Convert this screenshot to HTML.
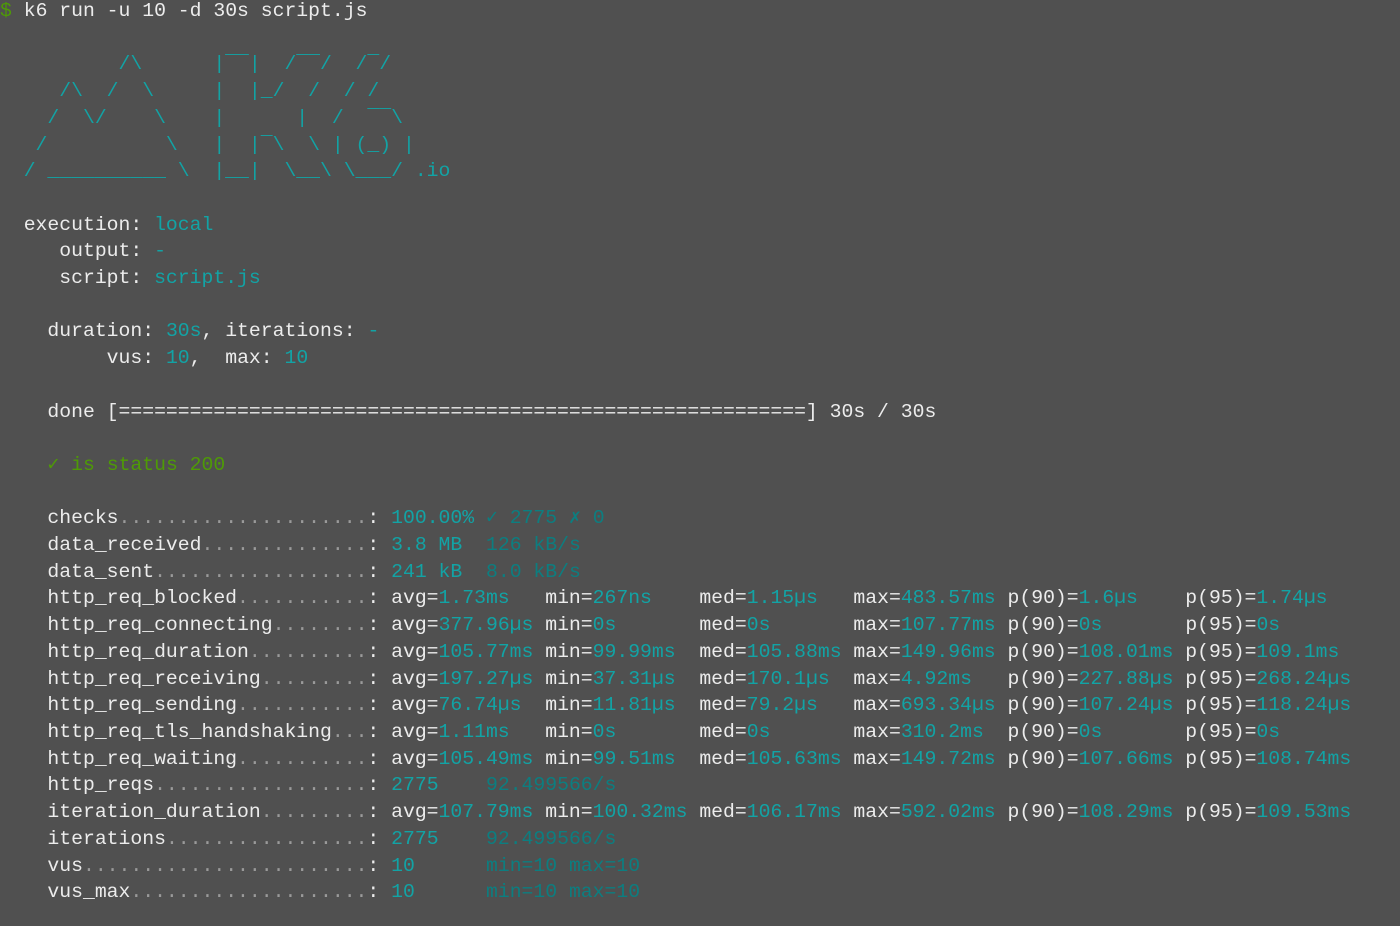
<!DOCTYPE html>
<html><head><meta charset="utf-8"><style>
html,body{margin:0;padding:0;background:#505050;width:1400px;height:926px;overflow:hidden}
pre{margin:0;position:absolute;left:0;top:-2px;font-family:"Liberation Mono","DejaVu Sans Mono",monospace;font-size:19.75px;line-height:26.7px;color:#ececec}
.c{color:#12a3a5}.d{color:#0c7e80}.g{color:#4e9a06}.s{color:#9a9a9a}
</style></head><body><pre><span class="g">$</span> k6 run -u 10 -d 30s script.js
<span class="c">
          /\      |‾‾|  /‾‾/  /‾/
     /\  /  \     |  |_/  /  / /
    /  \/    \    |      |  /  ‾‾\
   /          \   |  |‾\  \ | (_) |
  / __________ \  |__|  \__\ \___/ .io</span>

  execution: <span class="c">local</span>
     output: <span class="c">-</span>
     script: <span class="c">script.js</span>

    duration: <span class="c">30s</span>, iterations: <span class="c">-</span>
         vus: <span class="c">10</span>,  max: <span class="c">10</span>

    done [==========================================================] 30s / 30s

    <span class="g">✓ is status 200</span>

    checks<span class="s">.....................</span>: <span class="c">100.00%</span> <span class="d">✓ 2775 ✗ 0</span>
    data_received<span class="s">..............</span>: <span class="c">3.8 MB</span>  <span class="d">126 kB/s</span>
    data_sent<span class="s">..................</span>: <span class="c">241 kB</span>  <span class="d">8.0 kB/s</span>
    http_req_blocked<span class="s">...........</span>: avg=<span class="c">1.73ms</span>   min=<span class="c">267ns</span>    med=<span class="c">1.15µs</span>   max=<span class="c">483.57ms</span> p(90)=<span class="c">1.6µs</span>    p(95)=<span class="c">1.74µs</span>
    http_req_connecting<span class="s">........</span>: avg=<span class="c">377.96µs</span> min=<span class="c">0s</span>       med=<span class="c">0s</span>       max=<span class="c">107.77ms</span> p(90)=<span class="c">0s</span>       p(95)=<span class="c">0s</span>
    http_req_duration<span class="s">..........</span>: avg=<span class="c">105.77ms</span> min=<span class="c">99.99ms</span>  med=<span class="c">105.88ms</span> max=<span class="c">149.96ms</span> p(90)=<span class="c">108.01ms</span> p(95)=<span class="c">109.1ms</span>
    http_req_receiving<span class="s">.........</span>: avg=<span class="c">197.27µs</span> min=<span class="c">37.31µs</span>  med=<span class="c">170.1µs</span>  max=<span class="c">4.92ms</span>   p(90)=<span class="c">227.88µs</span> p(95)=<span class="c">268.24µs</span>
    http_req_sending<span class="s">...........</span>: avg=<span class="c">76.74µs</span>  min=<span class="c">11.81µs</span>  med=<span class="c">79.2µs</span>   max=<span class="c">693.34µs</span> p(90)=<span class="c">107.24µs</span> p(95)=<span class="c">118.24µs</span>
    http_req_tls_handshaking<span class="s">...</span>: avg=<span class="c">1.11ms</span>   min=<span class="c">0s</span>       med=<span class="c">0s</span>       max=<span class="c">310.2ms</span>  p(90)=<span class="c">0s</span>       p(95)=<span class="c">0s</span>
    http_req_waiting<span class="s">...........</span>: avg=<span class="c">105.49ms</span> min=<span class="c">99.51ms</span>  med=<span class="c">105.63ms</span> max=<span class="c">149.72ms</span> p(90)=<span class="c">107.66ms</span> p(95)=<span class="c">108.74ms</span>
    http_reqs<span class="s">..................</span>: <span class="c">2775</span>    <span class="d">92.499566/s</span>
    iteration_duration<span class="s">.........</span>: avg=<span class="c">107.79ms</span> min=<span class="c">100.32ms</span> med=<span class="c">106.17ms</span> max=<span class="c">592.02ms</span> p(90)=<span class="c">108.29ms</span> p(95)=<span class="c">109.53ms</span>
    iterations<span class="s">.................</span>: <span class="c">2775</span>    <span class="d">92.499566/s</span>
    vus<span class="s">........................</span>: <span class="c">10</span>      <span class="d">min=10 max=10</span>
    vus_max<span class="s">....................</span>: <span class="c">10</span>      <span class="d">min=10 max=10</span>
</pre></body></html>
